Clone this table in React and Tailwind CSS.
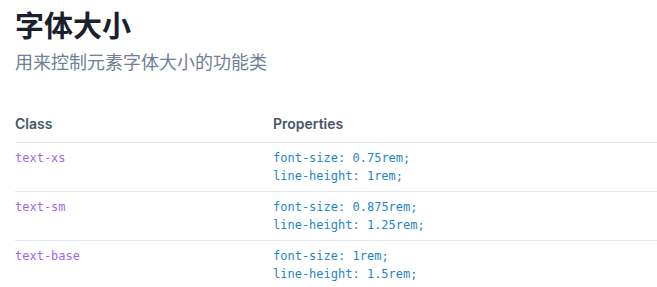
import React from 'react'

const rows = [
  { name: 'text-xs', size: '0.75rem', leading: '1rem' },
  { name: 'text-sm', size: '0.875rem', leading: '1.25rem' },
  { name: 'text-base', size: '1rem', leading: '1.5rem' },
]

const sans = 'font-["Inter","Noto_Sans_CJK_SC",sans-serif]'

const App = () => {
  return (
    <div className={`min-h-screen bg-white pl-[15px] pt-[6px] ${sans}`}>
      {/* Header */}
      <h1 className='text-[29px] leading-[36px] font-bold text-[#1a202c] font-["Noto_Sans_CJK_SC",sans-serif]'>
        字体大小
      </h1>
      <p className='mt-[5px] text-[18px] leading-[28px] text-[#718096] font-["Noto_Sans_CJK_SC",sans-serif]'>
        用来控制元素字体大小的功能类
      </p>

      {/* Table */}
      <div className="mt-[39px]">
        <div className="flex pb-[8px] text-sm leading-5 font-semibold text-[#4a5568]">
          <div className="w-[258px]">Class</div>
          <div>Properties</div>
        </div>
        {rows.map((row) => (
          <div
            key={row.name}
            className='flex border-t border-[#e2e8f0] py-[6px] text-[12px] leading-[18px] font-["DejaVu_Sans_Mono",monospace]'
          >
            <div className="w-[258px] text-[#9f67f0]">{row.name}</div>
            <div className="text-[#1e86c8]">
              <div>font-size: {row.size};</div>
              <div>line-height: {row.leading};</div>
            </div>
          </div>
        ))}
      </div>
    </div>
  )
}

export default App
